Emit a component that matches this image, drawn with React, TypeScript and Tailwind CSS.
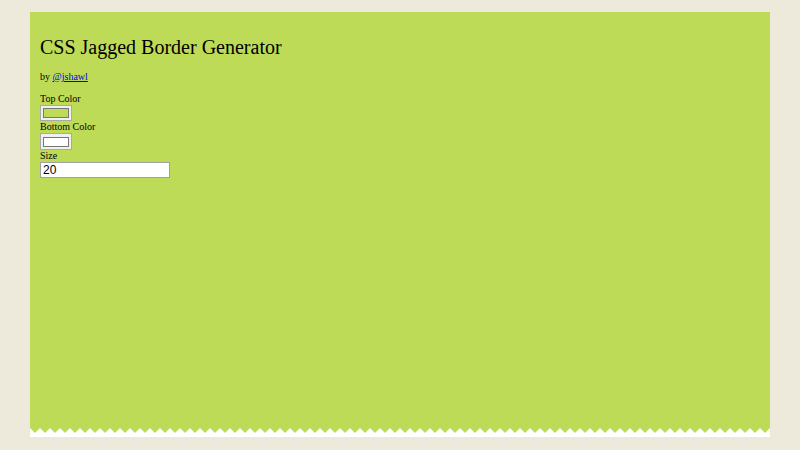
export default function App() {
  return (
    <div className="min-h-[450px] w-full bg-[#eeeadb] pt-[12px] font-['Liberation_Serif',serif] text-black">
      <div className="mx-[30px] w-[740px]">
        <div className="h-[416px] bg-[#bedb57] px-[10px] pt-[23px]">
          <h1 className="text-[20px] leading-[24px]">CSS Jagged Border Generator</h1>
          <p className="mt-[12px] text-[10px] leading-[12px]">
            by{" "}
            <a href="#" className="text-[#0000ee] underline">
              @jshawl
            </a>
          </p>
          <div className="mt-[10px] flex flex-col items-start text-[10px] leading-[12px]">
            <label>Top Color</label>
            <div className="flex h-[16px] w-[32px] items-center justify-center border border-[#a9a9a9] bg-[#f0f0f0]">
              <div className="h-[10px] w-[26px] border border-[#777] bg-[#bedb57]" />
            </div>
            <label>Bottom Color</label>
            <div className="flex h-[17px] w-[32px] items-center justify-center border border-[#a9a9a9] bg-[#f0f0f0]">
              <div className="h-[10px] w-[26px] border border-[#777] bg-white" />
            </div>
            <label>Size</label>
            <input
              type="text"
              defaultValue="20"
              className="h-[16px] w-[130px] border border-[#a0a0a0] bg-white px-[2px] font-['Liberation_Sans',sans-serif] text-[12px] leading-[14px] text-black outline-none"
            />
          </div>
        </div>
        <svg width="740" height="5" className="block" viewBox="0 0 740 5" preserveAspectRatio="none">
          <defs>
            <pattern id="teeth" width="10" height="5" patternUnits="userSpaceOnUse">
              <rect width="10" height="5" fill="#ffffff" />
              <path d="M0 0 L10 0 L5 5 Z" fill="#bedb57" />
            </pattern>
          </defs>
          <rect width="740" height="5" fill="url(#teeth)" />
        </svg>
        <div className="h-[4px] bg-white" />
      </div>
    </div>
  );
}
